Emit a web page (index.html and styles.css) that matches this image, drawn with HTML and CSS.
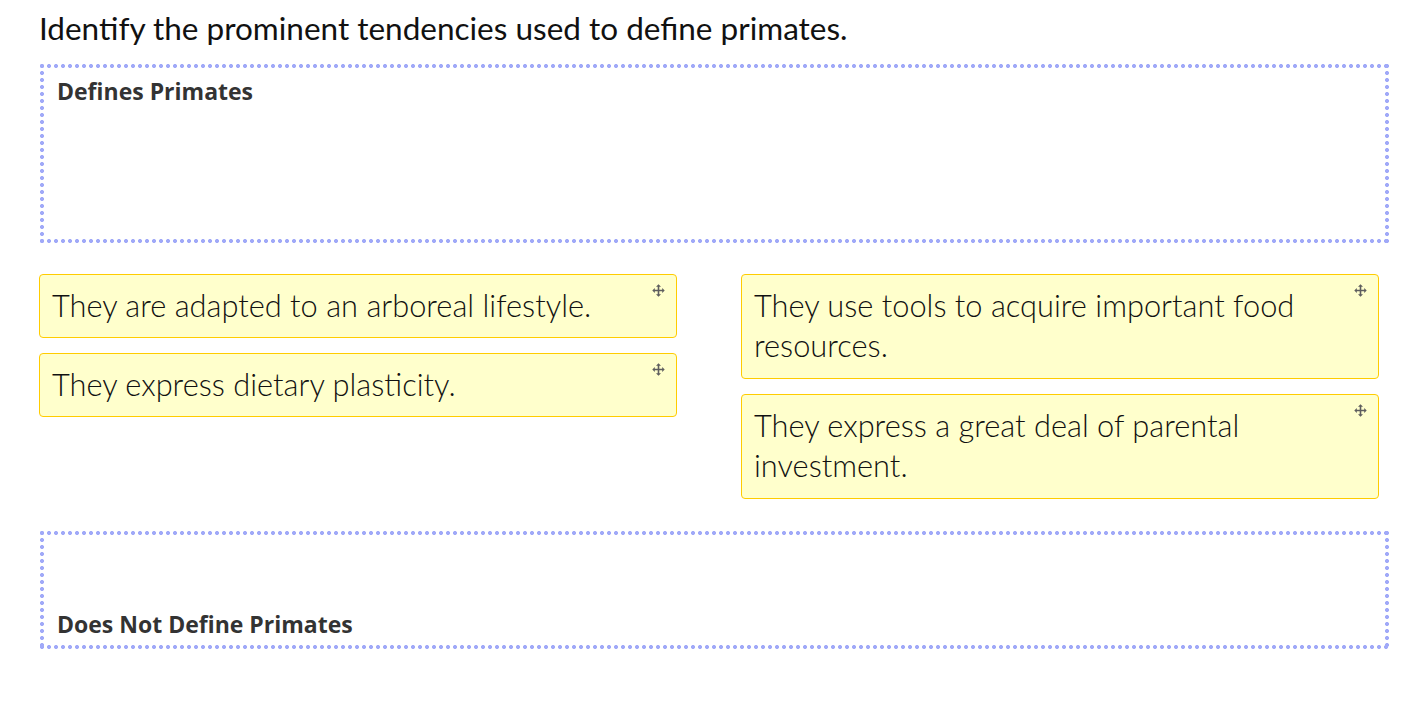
FILE: index.html
```html
<!DOCTYPE html>
<html>
<head>
<meta charset="utf-8">
<link rel="stylesheet" href="styles.css">
</head>
<body>
<div class="page">
  <h1 class="prompt">Identify the prominent tendencies used to define primates.</h1>
  <div class="zone zone-top">
    <div class="zone-label">Defines Primates</div>
  </div>
  <div class="cards">
    <div class="col">
      <div class="card"><span class="card-text">They are adapted to an arboreal lifestyle.</span>
        <svg class="move" viewBox="0 0 13 13"><path d="M6.5 0.3 L9 2.8 H7.3 V5.7 H10.2 V4 L12.7 6.5 L10.2 9 V7.3 H7.3 V10.2 H9 L6.5 12.7 L4 10.2 H5.7 V7.3 H2.8 V9 L0.3 6.5 L2.8 4 V5.7 H5.7 V2.8 H4 Z"/></svg>
      </div>
      <div class="card"><span class="card-text">They express dietary plasticity.</span>
        <svg class="move" viewBox="0 0 13 13"><path d="M6.5 0.3 L9 2.8 H7.3 V5.7 H10.2 V4 L12.7 6.5 L10.2 9 V7.3 H7.3 V10.2 H9 L6.5 12.7 L4 10.2 H5.7 V7.3 H2.8 V9 L0.3 6.5 L2.8 4 V5.7 H5.7 V2.8 H4 Z"/></svg>
      </div>
    </div>
    <div class="col">
      <div class="card card-tall"><span class="card-text">They use tools to acquire important food resources.</span>
        <svg class="move" viewBox="0 0 13 13"><path d="M6.5 0.3 L9 2.8 H7.3 V5.7 H10.2 V4 L12.7 6.5 L10.2 9 V7.3 H7.3 V10.2 H9 L6.5 12.7 L4 10.2 H5.7 V7.3 H2.8 V9 L0.3 6.5 L2.8 4 V5.7 H5.7 V2.8 H4 Z"/></svg>
      </div>
      <div class="card card-tall"><span class="card-text">They express a great deal of parental investment.</span>
        <svg class="move" viewBox="0 0 13 13"><path d="M6.5 0.3 L9 2.8 H7.3 V5.7 H10.2 V4 L12.7 6.5 L10.2 9 V7.3 H7.3 V10.2 H9 L6.5 12.7 L4 10.2 H5.7 V7.3 H2.8 V9 L0.3 6.5 L2.8 4 V5.7 H5.7 V2.8 H4 Z"/></svg>
      </div>
    </div>
  </div>
  <div class="zone zone-bottom">
    <div class="zone-label">Does Not Define Primates</div>
  </div>
</div>
</body>
</html>
```
FILE: styles.css
```css
html, body {
  margin: 0;
  padding: 0;
  background: #ffffff;
}
body {
  font-family: Lato, "Open Sans", sans-serif;
  color: #111;
}
.page {
  padding: 6px 30px 0 39px;
  display: flex;
  flex-direction: column;
}
.prompt {
  margin: 0 0 14px 0;
  font-size: 31.5px;
  font-weight: 400;
  line-height: 44px;
  color: #111;
}
.zone {
  margin-left: 1px;
  box-sizing: border-box;
  padding: 12px 17px;
  display: flex;
  flex-direction: column;
  background-image:
    radial-gradient(circle at 2px 2px, #a0a9f8 1.7px, transparent 2.3px),
    radial-gradient(circle at 2px 2px, #a0a9f8 1.7px, transparent 2.3px),
    radial-gradient(circle at 2px 2px, #a0a9f8 1.7px, transparent 2.3px),
    radial-gradient(circle at 2px 2px, #a0a9f8 1.7px, transparent 2.3px);
  background-size: 7px 4px, 7px 4px, 4px 7px, 4px 7px;
  background-repeat: repeat-x, repeat-x, repeat-y, repeat-y;
  background-position: 0 0, 0 100%, 0 0, 100% 0;
}
.zone-top {
  height: 179px;
}
.zone-bottom {
  height: 118px;
  justify-content: flex-end;
  padding-bottom: 10px;
}
.zone-label {
  font-family: "Open Sans", Lato, sans-serif;
  font-size: 23px;
  font-weight: 700;
  color: #333;
  line-height: 30px;
}
.cards {
  display: grid;
  grid-template-columns: 638px 638px;
  column-gap: 64px;
  margin: 31px 0 32px 0;
  align-items: start;
}
.col {
  display: flex;
  flex-direction: column;
  gap: 15px;
}
.card {
  position: relative;
  background: #ffffcc;
  border: 1px solid #ffcc00;
  border-radius: 4px;
  padding: 11px 48px 11px 12px;
  font-size: 30.8px;
  font-weight: 300;
  line-height: 40px;
  color: #111;
}
.card-tall {
  padding-bottom: 12px;
}
.move {
  position: absolute;
  top: 9px;
  right: 11px;
  width: 13px;
  height: 13px;
  fill: #5e5e5e;
}
```
